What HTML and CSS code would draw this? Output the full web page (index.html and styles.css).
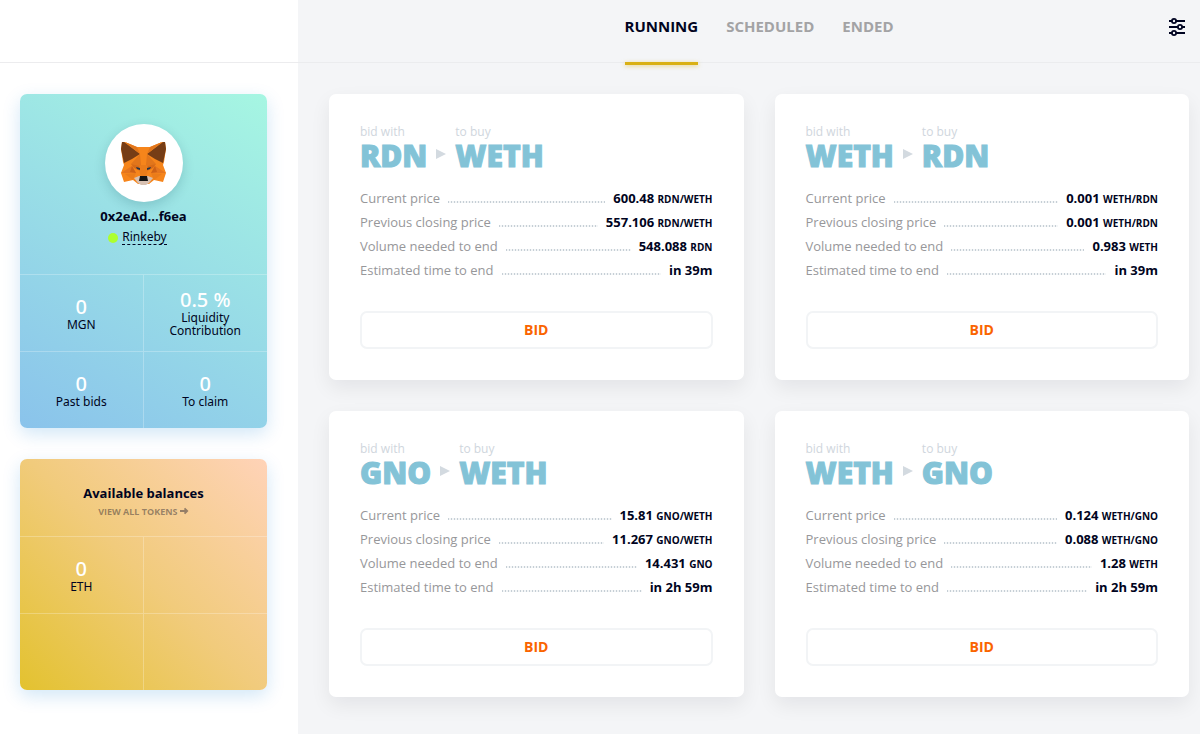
FILE: index.html
```html
<!DOCTYPE html>
<html lang="en">
<head>
<meta charset="utf-8">
<meta name="viewport" content="width=device-width, initial-scale=1">
<title>Running auctions</title>
<link rel="stylesheet" href="styles.css">
</head>
<body>
<div class="app">
  <aside class="sidebar">
    <div class="sidebar-top"></div>
    <div class="sidebar-body">
      <section class="panel wallet">
        <div class="wallet-head">
          <div class="avatar">
            <svg viewBox="0 0 45 43" width="45" height="43" aria-hidden="true">
              <path fill="#f6851b" d="M1 0h3l12 5h13l12-5h3l1 7-2 13-1 3 3 8-3 9-9-2-5 4H17l-5-4-9 2-3-9 3-8-1-3L0 7z"/>
              <path fill="#763d16" d="M1 0h2l16 12-8 5-8 4L0 7zM44 0h-2L26 12l8 5 8 4 3-14z"/>
              <path fill="#e2761b" d="m4 0 12 5 3 7zM41 0 29 5l-3 7zM19 12l-9 10 8 4 2-3zM26 12l9 10-8 4-2-3z"/>
              <path fill="#d66a18" d="m10 22 8 2 1 5-6-3zM35 22l-8 2-1 5 6-3z"/>
              <path fill="#e4751f" d="m0 31 11-7 4 7zM45 31l-11-7-4 7z"/>
              <path fill="#cd6116" d="m11 24 4 7-6-1zM34 24l-4 7 6-1z"/>
              <path fill="#e2761b" d="m4 32 11-1-3 7zM41 32l-11-1 3 7zM18 28l2 7h5l2-7-2-5h-5z" opacity=".6"/>
              <path fill="#233447" d="m15 25 4 1v2l-3-1zM30 25l-4 1v2l3-1z"/>
              <path fill="#d7c1b3" d="m13 36 5-2h9l5 2-4 5-3 2h-5l-3-2z"/>
              <path fill="#161616" d="m19 34h7l1 5h-9z"/>
            </svg>
          </div>
          <h2 class="address">0x2eAd...f6ea</h2>
          <p class="network"><span class="status"></span><span class="network-name">Rinkeby</span></p>
        </div>
        <div class="stats">
          <div class="stat"><strong>0</strong><span>MGN</span></div>
          <div class="stat"><strong>0.5 %</strong><span>Liquidity Contribution</span></div>
          <div class="stat"><strong>0</strong><span>Past bids</span></div>
          <div class="stat"><strong>0</strong><span>To claim</span></div>
        </div>
      </section>
      <section class="panel balances">
        <div class="balances-head">
          <h2>Available balances</h2>
          <a href="#tokens">VIEW ALL TOKENS
            <svg viewBox="0 0 10 8" width="9" height="8" aria-hidden="true"><path d="M0 4h8M5 1l3 3-3 3" fill="none" stroke="currentColor" stroke-width="2"/></svg></a>
        </div>
        <div class="stats">
          <div class="stat"><strong>0</strong><span>ETH</span></div>
          <div class="stat"></div>
          <div class="stat"></div>
          <div class="stat"></div>
        </div>
      </section>
    </div>
  </aside>

  <main class="main">
    <header class="topbar">
      <nav class="tabs">
        <a class="tab active" href="#running">RUNNING</a>
        <a class="tab" href="#scheduled">SCHEDULED</a>
        <a class="tab" href="#ended">ENDED</a>
      </nav>
      <button class="filter" type="button" aria-label="Filters">
        <svg viewBox="0 0 16 18" width="16" height="18" aria-hidden="true">
          <g fill="#f4f5f7" stroke="#000421" stroke-width="1.8">
            <path d="M0 3h16M0 9h16M0 15h16"/>
            <circle cx="5" cy="3" r="2.1"/><circle cx="11" cy="9" r="2.1"/><circle cx="5" cy="15" r="2.1"/>
          </g>
        </svg>
      </button>
    </header>

    <div class="auctions">
      <article class="card">
        <div class="pair">
          <div class="side"><span>bid with</span><strong>RDN</strong></div>
          <i class="arrow"></i>
          <div class="side"><span>to buy</span><strong>WETH</strong></div>
        </div>
        <dl class="rows">
          <div class="row"><dt>Current price</dt><dd>600.48 <small>RDN/WETH</small></dd></div>
          <div class="row"><dt>Previous closing price</dt><dd>557.106 <small>RDN/WETH</small></dd></div>
          <div class="row"><dt>Volume needed to end</dt><dd>548.088 <small>RDN</small></dd></div>
          <div class="row"><dt>Estimated time to end</dt><dd>in 39m</dd></div>
        </dl>
        <button class="bid" type="button">BID</button>
      </article>

      <article class="card">
        <div class="pair">
          <div class="side"><span>bid with</span><strong>WETH</strong></div>
          <i class="arrow"></i>
          <div class="side"><span>to buy</span><strong>RDN</strong></div>
        </div>
        <dl class="rows">
          <div class="row"><dt>Current price</dt><dd>0.001 <small>WETH/RDN</small></dd></div>
          <div class="row"><dt>Previous closing price</dt><dd>0.001 <small>WETH/RDN</small></dd></div>
          <div class="row"><dt>Volume needed to end</dt><dd>0.983 <small>WETH</small></dd></div>
          <div class="row"><dt>Estimated time to end</dt><dd>in 39m</dd></div>
        </dl>
        <button class="bid" type="button">BID</button>
      </article>

      <article class="card">
        <div class="pair">
          <div class="side"><span>bid with</span><strong>GNO</strong></div>
          <i class="arrow"></i>
          <div class="side"><span>to buy</span><strong>WETH</strong></div>
        </div>
        <dl class="rows">
          <div class="row"><dt>Current price</dt><dd>15.81 <small>GNO/WETH</small></dd></div>
          <div class="row"><dt>Previous closing price</dt><dd>11.267 <small>GNO/WETH</small></dd></div>
          <div class="row"><dt>Volume needed to end</dt><dd>14.431 <small>GNO</small></dd></div>
          <div class="row"><dt>Estimated time to end</dt><dd>in 2h 59m</dd></div>
        </dl>
        <button class="bid" type="button">BID</button>
      </article>

      <article class="card">
        <div class="pair">
          <div class="side"><span>bid with</span><strong>WETH</strong></div>
          <i class="arrow"></i>
          <div class="side"><span>to buy</span><strong>GNO</strong></div>
        </div>
        <dl class="rows">
          <div class="row"><dt>Current price</dt><dd>0.124 <small>WETH/GNO</small></dd></div>
          <div class="row"><dt>Previous closing price</dt><dd>0.088 <small>WETH/GNO</small></dd></div>
          <div class="row"><dt>Volume needed to end</dt><dd>1.28 <small>WETH</small></dd></div>
          <div class="row"><dt>Estimated time to end</dt><dd>in 2h 59m</dd></div>
        </dl>
        <button class="bid" type="button">BID</button>
      </article>
    </div>
  </main>
</div>
</body>
</html>
```

FILE: styles.css
```css
* { box-sizing: border-box; }

body {
  margin: 0;
  font-family: "Open Sans", "Noto Sans", sans-serif;
  font-size: 13px;
  color: #000421;
  background: #fff;
}

h2, p, dl, dd { margin: 0; }
a { color: inherit; text-decoration: none; }
button { font: inherit; color: inherit; cursor: pointer; }

.app {
  display: grid;
  grid-template-columns: 298px minmax(0, 1fr);
  min-height: 100vh;
}

/* Sidebar */
.sidebar-top {
  height: 63px;
  border-bottom: 1px solid #ececee;
}
.sidebar-body {
  display: grid;
  gap: 31px;
  padding: 31px 31px 31px 20px;
}
.panel {
  border-radius: 7px;
  overflow: hidden;
  text-align: center;
  box-shadow: 0 6px 18px rgba(0, 120, 210, 0.18);
}
.wallet { background: linear-gradient(30deg, #8ac3eb, #a6f6e2); }
.balances { background: linear-gradient(45deg, #e3c22f, #f1cb7c 50%, #ffd3b8); }

.wallet-head {
  display: flex;
  flex-direction: column;
  align-items: center;
  padding: 30px 16px 29px;
}
.avatar {
  display: grid;
  place-items: center;
  width: 78px;
  height: 78px;
  border-radius: 50%;
  background: #fff;
  box-shadow: 0 4px 12px rgba(0, 60, 80, 0.18);
}
.address {
  margin-top: 4px;
  font-size: 13px;
  line-height: 20px;
}
.network {
  display: flex;
  align-items: center;
  gap: 4px;
  margin-top: 4px;
  margin-right: 12px;
  font-family: "Noto Sans", sans-serif;
  font-size: 12px;
  line-height: 24px;
}
.status {
  width: 10px;
  height: 10px;
  border-radius: 50%;
  background: #adff2f;
}
.network-name {
  line-height: 14px;
  border-bottom: 1px dashed currentColor;
}

.stats {
  display: grid;
  grid-template-columns: 1fr 1fr;
  grid-auto-rows: 77px;
}
.stat {
  display: flex;
  flex-direction: column;
  align-items: center;
  justify-content: center;
  padding: 0 20px;
  border-top: 1px solid rgba(255, 255, 255, 0.25);
  font-family: "Noto Sans", sans-serif;
  font-size: 12px;
  line-height: 13px;
}
.stat:nth-child(odd) { border-right: 1px solid rgba(255, 255, 255, 0.25); }
.stat strong {
  font-size: 20px;
  font-weight: 500;
  line-height: 22px;
  color: #fff;
}

.balances-head {
  display: grid;
  justify-items: center;
  padding: 24px 16px 16px;
}
.balances-head h2 {
  font-size: 13px;
  line-height: 20px;
}
.balances-head a {
  font-size: 9px;
  font-weight: 700;
  line-height: 17px;
  color: rgba(0, 4, 33, 0.4);
}

/* Main column */
.main {
  background: #f4f5f7;
}
.topbar {
  display: flex;
  align-items: center;
  height: 63px;
  padding: 0 11px 0 31px;
  border-bottom: 1px solid #ebecee;
}
.tabs {
  display: flex;
  flex: 1;
  justify-content: center;
  align-self: flex-start;
  gap: 28px;
  height: 65px;
  margin-right: -28px;
}
.tab {
  display: flex;
  flex-direction: column;
  justify-content: space-between;
  padding-top: 16px;
  font-size: 15px;
  font-weight: 700;
  line-height: 20px;
  color: #a3a3a5;
}
.tab.active { color: #000421; }
.tab.active::after {
  content: "";
  height: 3px;
  background: #d9b015;
  box-shadow: 0 1px 4px rgba(217, 176, 21, 0.5);
}
.filter {
  width: 28px;
  height: 28px;
  margin-bottom: 9px;
  padding: 5px 4px 5px 8px;
  border: 0;
  background: none;
}
.filter svg { display: block; }

.auctions {
  display: grid;
  grid-template-columns: repeat(2, minmax(0, 1fr));
  gap: 31px;
  padding: 31px 11px 37px 31px;
}
.card {
  padding: 29px 31px 31px;
  border-radius: 7px;
  background: #fff;
  box-shadow: 0 8px 20px rgba(0, 4, 33, 0.07);
}
.pair {
  display: flex;
  align-items: flex-end;
  gap: 9px;
}
.side {
  display: flex;
  flex-direction: column;
}
.side span {
  font-size: 12px;
  line-height: 18px;
  color: #cfd6dd;
}
.side strong {
  font-size: 30px;
  font-weight: 800;
  line-height: 30px;
  color: #83c3d7;
  -webkit-text-stroke: 1px #83c3d7;
}
.arrow {
  margin-bottom: 12px;
  border: solid transparent;
  border-width: 5px 0 5px 10px;
  border-left-color: #d3dae0;
}
.rows {
  margin-top: 15px;
}
.row {
  display: flex;
  align-items: center;
  gap: 8px;
  line-height: 24px;
}
.row::before {
  content: "";
  order: 1;
  flex: 1;
  height: 2px;
  margin-top: 8px;
  background: repeating-linear-gradient(90deg, #c6cfd6 0 1px, #f4f6f7 1px 3px);
}
.row dt { color: #97979a; }
.row dd {
  order: 2;
  font-weight: 700;
}
.row small {
  font-size: 10px;
  line-height: 10px;
}
.bid {
  display: block;
  width: 100%;
  height: 38px;
  margin-top: 29px;
  padding: 0 0 2px;
  border: 2px solid #f2f4f6;
  border-radius: 7px;
  background: #fff;
  font-size: 14px;
  font-weight: 700;
  color: #fa6400;
}
```
